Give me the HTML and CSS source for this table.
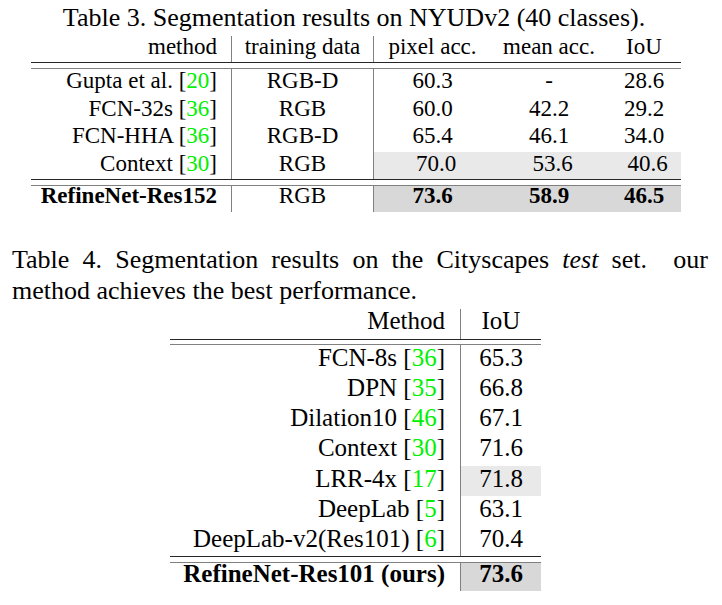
FILE: index.html
```html
<!DOCTYPE html>
<html>
<head>
<meta charset="utf-8">
<link rel="stylesheet" href="styles.css">
</head>
<body>
<section class="t3">
  <div class="t3-title">Table 3. Segmentation results on NYUDv2 (40 classes).</div>
  <div class="row3 head3">
    <div class="m">method</div><div class="d">training data</div><div class="n">pixel acc.</div><div class="n">mean acc.</div><div class="n">IoU</div>
  </div>
  <div class="drule drule3"></div>
  <div class="row3 body3">
    <div class="m">Gupta et al. [<span class="cite">20</span>]</div><div class="d">RGB-D</div><div class="n">60.3</div><div class="n">-</div><div class="n">28.6</div>
  </div>
  <div class="row3 body3">
    <div class="m">FCN-32s [<span class="cite">36</span>]</div><div class="d">RGB</div><div class="n">60.0</div><div class="n">42.2</div><div class="n">29.2</div>
  </div>
  <div class="row3 body3">
    <div class="m">FCN-HHA [<span class="cite">36</span>]</div><div class="d">RGB-D</div><div class="n">65.4</div><div class="n">46.1</div><div class="n">34.0</div>
  </div>
  <div class="row3 body3">
    <div class="m">Context [<span class="cite">30</span>]</div><div class="d">RGB</div><div class="n hl-light shift">70.0</div><div class="n hl-light shift">53.6</div><div class="n hl-light shift">40.6</div>
  </div>
  <div class="drule drule3"></div>
  <div class="row3 best3">
    <div class="m b">RefineNet-Res152</div><div class="d">RGB</div><div class="n b hl-dark">73.6</div><div class="n b hl-dark">58.9</div><div class="n b hl-dark">46.5</div>
  </div>
</section>

<div class="t4-caption">
  <div class="cap-line cap-first">Table 4. Segmentation results on the Cityscapes <i>test</i> set.&nbsp; our</div>
  <div class="cap-line">method achieves the best performance.</div>
</div>

<section class="t4">
  <div class="row4 head4">
    <div class="m">Method</div><div class="n">IoU</div>
  </div>
  <div class="drule drule4a"></div>
  <div class="row4 body4"><div class="m">FCN-8s [<span class="cite">36</span>]</div><div class="n">65.3</div></div>
  <div class="row4 body4"><div class="m">DPN [<span class="cite">35</span>]</div><div class="n">66.8</div></div>
  <div class="row4 body4"><div class="m">Dilation10 [<span class="cite">46</span>]</div><div class="n">67.1</div></div>
  <div class="row4 body4"><div class="m">Context [<span class="cite">30</span>]</div><div class="n">71.6</div></div>
  <div class="row4 body4"><div class="m">LRR-4x [<span class="cite">17</span>]</div><div class="n hl-light">71.8</div></div>
  <div class="row4 body4"><div class="m">DeepLab [<span class="cite">5</span>]</div><div class="n">63.1</div></div>
  <div class="row4 body4"><div class="m">DeepLab-v2(Res101) [<span class="cite">6</span>]</div><div class="n">70.4</div></div>
  <div class="drule drule4b"></div>
  <div class="row4 best4"><div class="m b">RefineNet-Res101 (ours)</div><div class="n b hl-dark">73.6</div></div>
</section>
</body>
</html>
```

FILE: styles.css
```css
html, body {
  margin: 0;
  padding: 0;
  background: #ffffff;
}

body {
  font-family: "Liberation Serif", "Times New Roman", serif;
  color: #000000;
  width: 722px;
}

.cite {
  color: #00f000;
}

.b {
  font-weight: bold;
}

.hl-light {
  background: #e9e9e9;
}

.hl-dark {
  background: #d8d8d8;
}

.drule {
  border-top: 1px solid #262626;
  border-bottom: 1px solid #808080;
}

/* ---------- Table 3 ---------- */
.t3 {
  margin-left: 31px;
  width: 650px;
}

.t3-title {
  margin-top: 3px;
  font-size: 26px;
  line-height: 30px;
  text-align: center;
  white-space: nowrap;
  margin-bottom: 3px;
  padding-right: 4px;
}

.row3 {
  display: grid;
  grid-template-columns: 201px 142px 117px 116px 74px;
  font-size: 23px;
  white-space: nowrap;
}

.row3 > div {
  text-align: center;
}

.row3 > .m {
  text-align: right;
  padding-right: 14px;
  border-right: 1px solid #808080;
}

.row3 > .d {
  border-right: 1px solid #808080;
}

.head3 > div {
  line-height: 22px;
  padding-bottom: 4px;
}

.body3 > div {
  line-height: 24px;
  padding-bottom: 3.5px;
}

.best3 > div {
  line-height: 19px;
  padding-bottom: 7px;
}

.drule3 {
  height: 5px;
}

.row3 > .shift {
  padding-left: 7px;
}

/* ---------- Table 4 caption ---------- */
.t4-caption {
  margin-top: 32px;
  padding: 0 14px 0 12px;
  font-size: 26px;
  line-height: 31px;
}

.cap-line {
  white-space: nowrap;
}

.cap-first {
  white-space: normal;
  text-align: justify;
  text-align-last: justify;
}

/* ---------- Table 4 ---------- */
.t4 {
  margin-top: 3px;
  margin-left: 170px;
  width: 371px;
}

.row4 {
  display: grid;
  grid-template-columns: 291px 80px;
  font-size: 25px;
  white-space: nowrap;
}

.row4 > .m {
  text-align: right;
  padding-right: 15px;
  border-right: 1px solid #808080;
}

.row4 > .n {
  text-align: center;
}

.head4 > div {
  line-height: 23px;
  padding-bottom: 7px;
}

.drule4a {
  height: 4px;
}

.body4 > div {
  line-height: 26px;
  padding-bottom: 4.15px;
}

.drule4b {
  height: 5px;
}

.best4 > div {
  line-height: 22px;
  padding-bottom: 6px;
}
```
